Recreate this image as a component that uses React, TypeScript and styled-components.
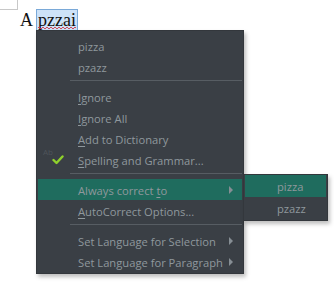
import React from "react";
import styled, { createGlobalStyle } from "styled-components";

const GlobalStyle = createGlobalStyle`
  html, body {
    margin: 0;
    padding: 0;
    background: #ffffff;
  }
  body {
    width: 334px;
    height: 283px;
    overflow: hidden;
  }
`;

const Page = styled.div`
  position: relative;
  width: 334px;
  height: 283px;
  background: #ffffff;
`;

const CornerMark = styled.div`
  width: 17px;
  height: 9px;
  border-right: 1px solid #c8c8c8;
  border-bottom: 1px solid #c8c8c8;
`;

const Line = styled.div`
  display: flex;
  align-items: flex-end;
  padding-left: 20px;
  margin-top: -1px;
  font-family: "Liberation Serif", serif;
  font-size: 18px;
  line-height: 22px;
  color: #111;
`;

const Misspelled = styled.span`
  position: relative;
  margin-left: 3px;
  padding: 0 1px;
  background: #cde2f8;
  border: 1px solid #7aa9d8;
  height: 20px;
  line-height: 20px;
`;

const Squiggle = styled.svg`
  position: absolute;
  left: 1px;
  bottom: 1px;
  width: 38px;
  height: 3px;
`;

const Menu = styled.div`
  position: absolute;
  left: 36px;
  top: 30px;
  width: 208px;
  padding: 4px 0 1px;
  background: #3a3f45;
  border: 1px solid #33373c;
  box-sizing: border-box;
  box-shadow: 2px 3px 4px rgba(0, 0, 0, 0.25);
  font-family: "Open Sans", "Noto Sans", sans-serif;
  font-size: 11.2px;
  color: #8f989d;
`;

const Item = styled.div<{ $active?: boolean }>`
  position: relative;
  display: flex;
  align-items: center;
  height: 21px;
  padding-left: 40px;
  margin: 0 1px;
  background: ${({ $active }) => ($active ? "#1f6c5e" : "transparent")};
`;

const Label = styled.span`
  white-space: pre;
  padding-top: 1px;
`;

const Separator = styled.div`
  height: 1px;
  margin: 3px 1px 5px 33px;
  background: #575d63;
`;

const Key = styled.span`
  text-decoration: underline;
  text-underline-offset: 2px;
`;

const Arrow = styled.span`
  position: absolute;
  right: 9px;
  top: 50%;
  margin-top: -4px;
  width: 0;
  height: 0;
  border-top: 4px solid transparent;
  border-bottom: 4px solid transparent;
  border-left: 4px solid #868e94;
`;

const IconSlot = styled.span`
  position: absolute;
  left: 4px;
  top: -2px;
  width: 22px;
  height: 18px;
`;

const Submenu = styled.div`
  position: absolute;
  left: 205px;
  top: -5px;
  width: 85px;
  padding: 0 0 1px;
  background: #3a3f45;
  border: 1px solid #33373c;
  box-sizing: border-box;
  box-shadow: 2px 3px 4px rgba(0, 0, 0, 0.25);
`;

const SubItem = styled.div<{ $active?: boolean }>`
  display: flex;
  align-items: center;
  height: 22px;
  padding-left: 32px;
  margin: 0 1px;
  background: ${({ $active }) => ($active ? "#1f6c5e" : "transparent")};
`;

function SpellIcon() {
  return (
    <svg width="22" height="18" viewBox="0 0 22 18">
      <text x="1" y="8" fontFamily="Open Sans, sans-serif" fontSize="8" fill="#4e545a">
        Ab
      </text>
      <path
        d="M11.5 13 L14.5 16 L20.5 9.5"
        fill="none"
        stroke="#8fd12c"
        strokeWidth="2.4"
        strokeLinecap="round"
        strokeLinejoin="round"
      />
    </svg>
  );
}

export default function App() {
  return (
    <Page>
      <GlobalStyle />
      <CornerMark />
      <Line>
        A
        <Misspelled>
          pzzai
          <Squiggle viewBox="0 0 38 3">
            <path
              d="M0 2 Q1 0 2 2 T4 2 T6 2 T8 2 T10 2 T12 2 T14 2 T16 2 T18 2 T20 2 T22 2 T24 2 T26 2 T28 2 T30 2 T32 2 T34 2 T36 2 T38 2"
              fill="none"
              stroke="#d03a4a"
              strokeWidth="0.9"
            />
          </Squiggle>
        </Misspelled>
      </Line>
      <Menu>
        <Item>
          <Label>pizza</Label>
        </Item>
        <Item>
          <Label>pzazz</Label>
        </Item>
        <Separator />
        <Item>
          <Label>
            <Key>I</Key>gnore
          </Label>
        </Item>
        <Item>
          <Label>
            <Key>I</Key>gnore All
          </Label>
        </Item>
        <Item>
          <Label>
            <Key>A</Key>dd to Dictionary
          </Label>
        </Item>
        <Item>
          <IconSlot>
            <SpellIcon />
          </IconSlot>
          <Label>
            <Key>S</Key>pelling and Grammar...
          </Label>
        </Item>
        <Separator />
        <Item $active>
          <Label>
            Always correct <Key>t</Key>o
          </Label>
          <Arrow />
          <Submenu>
            <SubItem $active>
              <Label>pizza</Label>
            </SubItem>
            <SubItem>
              <Label>pzazz</Label>
            </SubItem>
          </Submenu>
        </Item>
        <Item>
          <Label>
            <Key>A</Key>utoCorrect Options...
          </Label>
        </Item>
        <Separator />
        <Item>
          <Label>Set Language for Selection</Label>
          <Arrow />
        </Item>
        <Item>
          <Label>Set Language for Paragraph</Label>
          <Arrow />
        </Item>
      </Menu>
    </Page>
  );
}
